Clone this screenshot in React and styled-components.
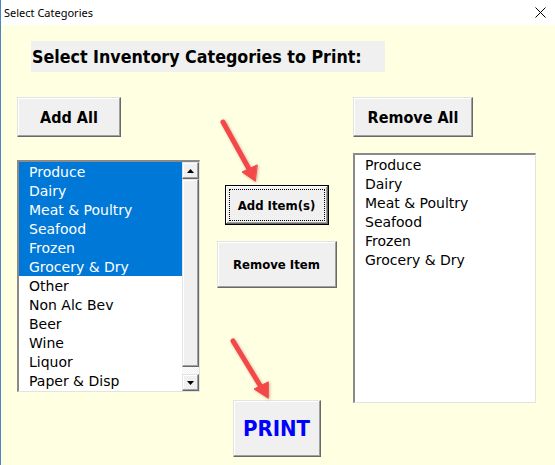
import React from "react";
import styled, { createGlobalStyle } from "styled-components";

const GlobalStyle = createGlobalStyle`
  html, body {
    margin: 0;
    padding: 0;
    background: #ffffe1;
  }
  body {
    font-family: "DejaVu Sans", Verdana, sans-serif;
  }
`;

const Window = styled.div`
  position: relative;
  width: 555px;
  height: 465px;
  overflow: hidden;
  box-sizing: border-box;
  background: #ffffe1;
  border-left: 1px solid #4a84c4;
`;

const TitleBar = styled.div`
  height: 25px;
  display: flex;
  align-items: center;
  justify-content: space-between;
  padding: 0 9px 0 3px;
  background: #fff;
  font-family: "Noto Sans", "Open Sans", sans-serif;
  font-size: 11px;
  color: #000;
`;

const Body = styled.div`
  padding: 16px 0 0 16px;
`;

const Heading = styled.div`
  width: 354px;
  height: 31px;
  margin-left: 14px;
  box-sizing: border-box;
  padding-left: 1px;
  display: flex;
  align-items: center;
  background: #f0f0f0;
  font-family: "DejaVu Sans Condensed", "DejaVu Sans", sans-serif;
  font-weight: bold;
  font-size: 17.7px;
  color: #000;
`;

const Columns = styled.div`
  display: flex;
  margin-top: 25px;
`;

const Column = styled.div`
  width: ${p => p.$width}px;
  display: flex;
  flex-direction: column;
  align-items: ${p => (p.$center ? "center" : "flex-start")};
`;

const Button = styled.button`
  position: relative;
  width: ${p => p.$w}px;
  height: ${p => p.$h}px;
  margin-top: ${p => p.$top || 0}px;
  padding: 0;
  box-sizing: border-box;
  background: #f0f0f0;
  border: 1px solid;
  border-color: #e3e3e3 #696969 #696969 #e3e3e3;
  box-shadow: inset -1px -1px 0 #a0a0a0, inset 1px 1px 0 #fff;
  font-family: "DejaVu Sans Condensed", "DejaVu Sans", sans-serif;
  font-weight: bold;
  font-size: ${p => p.$size}px;
  color: ${p => p.$color || "#000"};
  cursor: default;

  ${p =>
    p.$focused &&
    `
    border: 1px solid #000;
    box-shadow: inset -1px -1px 0 #696969, inset 1px 1px 0 #fff, inset -2px -2px 0 #a0a0a0;
    &::after {
      content: "";
      position: absolute;
      inset: 3px;
      border: 1px dotted #000;
    }
  `}
`;

const ListBox = styled.div`
  display: flex;
  width: 183px;
  height: ${p => p.$h}px;
  margin-top: ${p => p.$top}px;
  box-sizing: border-box;
  background: #fff;
  border-style: solid;
  border-width: 2px 1px 1px 2px;
  border-color: #8a8a8a #e3e3e3 #e3e3e3 #8a8a8a;
  overflow: hidden;
`;

const Items = styled.ul`
  flex: 1;
  margin: 0;
  padding: 0;
  list-style: none;
`;

const Item = styled.li`
  height: 19px;
  box-sizing: border-box;
  padding: 2px 0 0 10px;
  line-height: 17px;
  font-family: "DejaVu Sans", Verdana, sans-serif;
  font-size: 14px;
  white-space: nowrap;
  background: ${p => (p.$selected ? "#0078d7" : "transparent")};
  color: ${p => (p.$selected ? "#fff" : "#000")};
`;

const ScrollBar = styled.div`
  width: 17px;
  display: flex;
  flex-direction: column;
  background: repeating-conic-gradient(#f0f0f0 0 25%, #fff 0 50%) 0 0 / 2px 2px;
`;

const ScrollButton = styled.div`
  height: 17px;
  flex: none;
  box-sizing: border-box;
  display: flex;
  align-items: center;
  justify-content: center;
  background: #f0f0f0;
  border: 1px solid;
  border-color: #e3e3e3 #696969 #696969 #e3e3e3;
  box-shadow: inset -1px -1px 0 #a0a0a0, inset 1px 1px 0 #fff;
`;

const Thumb = styled.div`
  height: 188px;
  flex: none;
  box-sizing: border-box;
  background: #f0f0f0;
  border: 1px solid;
  border-color: #e3e3e3 #696969 #696969 #e3e3e3;
  box-shadow: inset -1px -1px 0 #a0a0a0, inset 1px 1px 0 #fff;
`;

const Spacer = styled.div`
  flex: 1;
`;

const Arrows = styled.svg`
  position: absolute;
  left: 0;
  top: 0;
  pointer-events: none;
  filter: drop-shadow(1px 1px 1.5px rgba(120, 40, 40, 0.35));
`;

const left = [
  "Produce",
  "Dairy",
  "Meat & Poultry",
  "Seafood",
  "Frozen",
  "Grocery & Dry",
  "Other",
  "Non Alc Bev",
  "Beer",
  "Wine",
  "Liquor",
  "Paper & Disp",
];

const right = ["Produce", "Dairy", "Meat & Poultry", "Seafood", "Frozen", "Grocery & Dry"];

const Triangle = ({ down }) => (
  <svg width="7" height="4" viewBox="0 0 7 4">
    <path d={down ? "M0 0H7L3.5 4Z" : "M0 4H7L3.5 0Z"} fill="#000" />
  </svg>
);

export default function App() {
  return (
    <Window>
      <GlobalStyle />
      <TitleBar>
        <span>Select Categories</span>
        <svg width="11" height="11" viewBox="0 0 11 11">
          <path d="M0.5 0.5L10.5 10.5M10.5 0.5L0.5 10.5" stroke="#000" strokeWidth="1" />
        </svg>
      </TitleBar>
      <Body>
        <Heading>Select Inventory Categories to Print:</Heading>
        <Columns>
          <Column $width={183}>
            <Button $w={104} $h={40} $size={16}>Add All</Button>
            <ListBox $h={232} $top={23}>
              <Items>
                {left.map((name, i) => (
                  <Item key={name} $selected={i < 6}>{name}</Item>
                ))}
              </Items>
              <ScrollBar>
                <ScrollButton><Triangle /></ScrollButton>
                <Thumb />
                <Spacer />
                <ScrollButton><Triangle down /></ScrollButton>
              </ScrollBar>
            </ListBox>
          </Column>
          <Column $width={153} $center>
            <Button $w={104} $h={40} $size={13} $top={88} $focused>Add Item(s)</Button>
            <Button $w={120} $h={47} $size={13} $top={16}>Remove Item</Button>
            <Button $w={88} $h={57} $size={22} $top={112} $color="#0000ff">PRINT</Button>
          </Column>
          <Column $width={183}>
            <Button $w={120} $h={40} $size={16}>Remove All</Button>
            <ListBox $h={250} $top={16}>
              <Items>
                {right.map(name => (
                  <Item key={name}>{name}</Item>
                ))}
              </Items>
            </ListBox>
          </Column>
        </Columns>
      </Body>
      <Arrows width="555" height="465" viewBox="0 0 555 465">
        <g fill="#f44848" stroke="#f44848" strokeLinecap="round">
          <line x1="222" y1="122" x2="248" y2="169" strokeWidth="5" />
          <path d="M254 181L241 172L256 165Z" strokeWidth="1" strokeLinejoin="round" />
          <line x1="232" y1="341" x2="260" y2="387" strokeWidth="5" />
          <path d="M267 398L253 389L267 382Z" strokeWidth="1" strokeLinejoin="round" />
        </g>
      </Arrows>
    </Window>
  );
}
